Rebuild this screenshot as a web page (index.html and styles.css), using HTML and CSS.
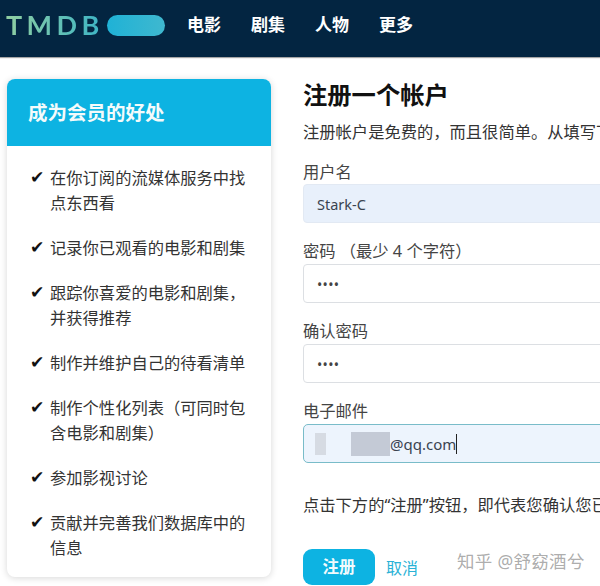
FILE: index.html
```html
<!DOCTYPE html>
<html lang="zh">
<head>
<meta charset="utf-8">
<title>注册一个帐户</title>
<link rel="stylesheet" href="styles.css">
</head>
<body>
<header class="topbar">
  <div class="logo"><span class="logo-text">TMDB</span><span class="logo-pill"></span></div>
  <nav class="nav"><span>电影</span><span>剧集</span><span>人物</span><span>更多</span></nav>
</header>
<main class="page">
  <aside class="card">
    <h2 class="card-title">成为会员的好处</h2>
    <ul class="perks">
      <li>在你订阅的流媒体服务中找点东西看</li>
      <li>记录你已观看的电影和剧集</li>
      <li>跟踪你喜爱的电影和剧集，并获得推荐</li>
      <li>制作并维护自己的待看清单</li>
      <li>制作个性化列表（可同时包含电影和剧集）</li>
      <li>参加影视讨论</li>
      <li>贡献并完善我们数据库中的信息</li>
    </ul>
  </aside>
  <section class="form">
    <h1 class="title">注册一个帐户</h1>
    <p class="intro">注册帐户是免费的，而且很简单。从填写下面的表格开始吧，只需几分钟。</p>
    <div class="label first">用户名</div>
    <div class="field filled">Stark-C</div>
    <div class="label">密码 （最少 4 个字符）</div>
    <div class="field dots">••••</div>
    <div class="label">确认密码</div>
    <div class="field dots">••••</div>
    <div class="label">电子邮件</div>
    <div class="field focus"><span class="blur-a"></span><span class="blur-b"></span><span>@qq.com</span><span class="caret"></span></div>
    <p class="terms">点击下方的“注册”按钮，即代表您确认您已阅读并同意我们的使用条款。</p>
    <div class="actions"><span class="btn">注册</span><span class="cancel">取消</span></div>
  </section>
</main>
<div class="watermark">知乎 @舒窈酒兮</div>
</body>
</html>
```
FILE: styles.css
```css
html, body { margin: 0; padding: 0; }
body {
  width: 600px; height: 586px; overflow: hidden; position: relative; background: #fff;
  font-family: "Noto Sans", "Noto Sans CJK SC", sans-serif; color: #2b2b2b;
}
.topbar {
  height: 57px; background: #032541; display: flex; align-items: center;
  box-shadow: 0 1px 1px rgba(0,0,0,.35); box-sizing: border-box; padding: 0 0 7px 6px;
}
.logo { display: flex; align-items: center; gap: 4px; width: 182px; }
.logo-text {
  font: 700 27px/30px "Lato", "Noto Sans", sans-serif; letter-spacing: 4.4px;
  background: linear-gradient(90deg, #90cea1, #3cb4c6); color: #7cc6ac;
  -webkit-background-clip: text; background-clip: text; -webkit-text-fill-color: transparent;
}
.logo-pill { width: 58px; height: 21px; border-radius: 11px; background: linear-gradient(90deg, #1fb2d6, #3fb8cf); margin-left: -1px; }
.nav { display: flex; gap: 30px; color: #fff; font-size: 17px; font-weight: 700; line-height: 22px; margin-left: -1px; }
.page { display: flex; align-items: flex-start; padding: 22px 0 0 7px; }
.card {
  width: 264px; height: 498px; flex: none; border-radius: 8px; overflow: hidden; background: #fff;
  box-shadow: 0 1px 7px rgba(0,0,0,.16);
}
.card-title {
  margin: 0; height: 67px; background: #0db3e2; color: #f4fbfb; font-size: 19.5px; font-weight: 700;
  line-height: 67px; padding-left: 21px; box-sizing: border-box;
}
.perks { list-style: none; margin: 0; padding: 20px 20px 0 43px; font-size: 16.3px; line-height: 25px; color: #333; }
.perks li { position: relative; margin-bottom: 20px; }
.perks li::before {
  content: "✔"; position: absolute; left: -20px; top: -1px; font: 17px/25px "DejaVu Sans", sans-serif; color: #111;
}
.form { width: 297px; margin-left: 32px; flex: none; overflow: hidden; }
.title { margin: 0; font-size: 24.3px; line-height: 32px; font-weight: 700; color: #111; }
.intro, .terms { margin: 0; font-size: 16.3px; line-height: 24px; white-space: nowrap; color: #333; }
.intro { margin-top: 9px; }
.label { font-size: 16.3px; line-height: 24px; color: #444; margin-top: 16px; height: 25px; white-space: nowrap; }
.label.first { margin-top: 16px; height: 24px; }
.field {
  height: 39px; box-sizing: border-box; width: 320px; border: 1px solid #dcdfe3; border-radius: 4px;
  padding: 0 13px; display: flex; align-items: center; font: 14.5px/20px "Noto Sans", sans-serif; color: #3a4350;
}
.filled { background: #e8f0fb; border-color: #e2e9f3; }
.dots { font-size: 14px; letter-spacing: .3px; color: #444; padding-top: 2px; }
.focus { background: #edf4fd; border-color: #79bcc9; border-radius: 5px; font-size: 15px; }
.blur-a { width: 11px; height: 22px; background: #d6dbe3; margin: 0 25px 0 -2px; }
.blur-b { width: 39px; height: 24px; background: #c4cad6; }
.caret { width: 1px; height: 20px; background: #222; }
.terms { margin-top: 30px; }
.actions { display: flex; align-items: center; gap: 11px; margin-top: 32px; }
.btn {
  width: 72px; height: 36px; background: #0db3e2; border-radius: 9px; color: #f2fbfd; text-align: center;
  font-size: 16.5px; line-height: 36px; font-weight: 700;
}
.cancel { color: #2ab2d6; font-size: 16px; }
.watermark {
  position: absolute; left: 457px; top: 550px; font-size: 17.5px; line-height: 22px;
  color: rgba(120,120,120,.62); letter-spacing: .3px;
}
```
